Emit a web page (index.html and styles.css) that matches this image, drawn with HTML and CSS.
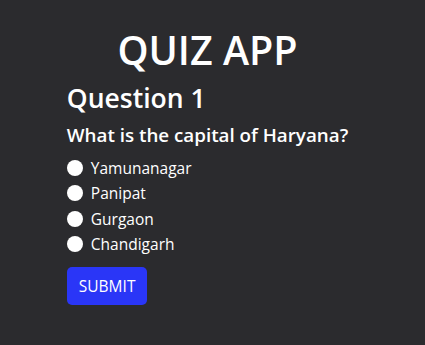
FILE: index.html
```html
<!DOCTYPE html>
<html>
<head>
<meta charset="utf-8">
<link rel="stylesheet" href="styles.css">
</head>
<body>
<div class="page">
  <div class="quiz">
    <h1 class="title">QUIZ APP</h1>
    <h2 class="qnum">Question 1</h2>
    <h3 class="qtext">What is the capital of Haryana?</h3>
    <ul class="options">
      <li class="option"><input type="radio" name="ans" class="radio" id="a1"><label for="a1">Yamunanagar</label></li>
      <li class="option"><input type="radio" name="ans" class="radio" id="a2"><label for="a2">Panipat</label></li>
      <li class="option"><input type="radio" name="ans" class="radio" id="a3"><label for="a3">Gurgaon</label></li>
      <li class="option"><input type="radio" name="ans" class="radio" id="a4"><label for="a4">Chandigarh</label></li>
    </ul>
    <button class="submit">SUBMIT</button>
  </div>
</div>
</body>
</html>
```
FILE: styles.css
```css
html, body {
  margin: 0;
  padding: 0;
  background: #2b2b2e;
  height: 100%;
}
body {
  font-family: "Open Sans", "Noto Sans", sans-serif;
  color: #ffffff;
}
.page {
  display: flex;
  justify-content: center;
  padding-top: 26px;
}
.quiz {
  display: flex;
  flex-direction: column;
  align-items: flex-start;
  padding-right: 10px;
}
.title {
  align-self: center;
  margin: 0;
  font-size: 39.5px;
  font-weight: 600;
  line-height: 48px;
}
.qnum {
  margin: 7px 0 0;
  font-size: 26.5px;
  font-weight: 600;
  line-height: 34px;
}
.qtext {
  margin: 6px 0 0;
  font-size: 18.8px;
  font-weight: 600;
  line-height: 28px;
}
.options {
  list-style: none;
  margin: 6px 0 0;
  padding: 0;
}
.option {
  display: flex;
  align-items: center;
  height: 25.5px;
  font-size: 15.5px;
}
.radio {
  appearance: none;
  -webkit-appearance: none;
  width: 16px;
  height: 16px;
  border-radius: 50%;
  background: #ffffff;
  margin: 0 8px 0 0;
}
.submit {
  margin-top: 10px;
  background: #2a36f7;
  color: #ffffff;
  border: none;
  border-radius: 5px;
  font-family: inherit;
  font-size: 15.5px;
  padding: 0 12px;
  height: 38px;
}
```
